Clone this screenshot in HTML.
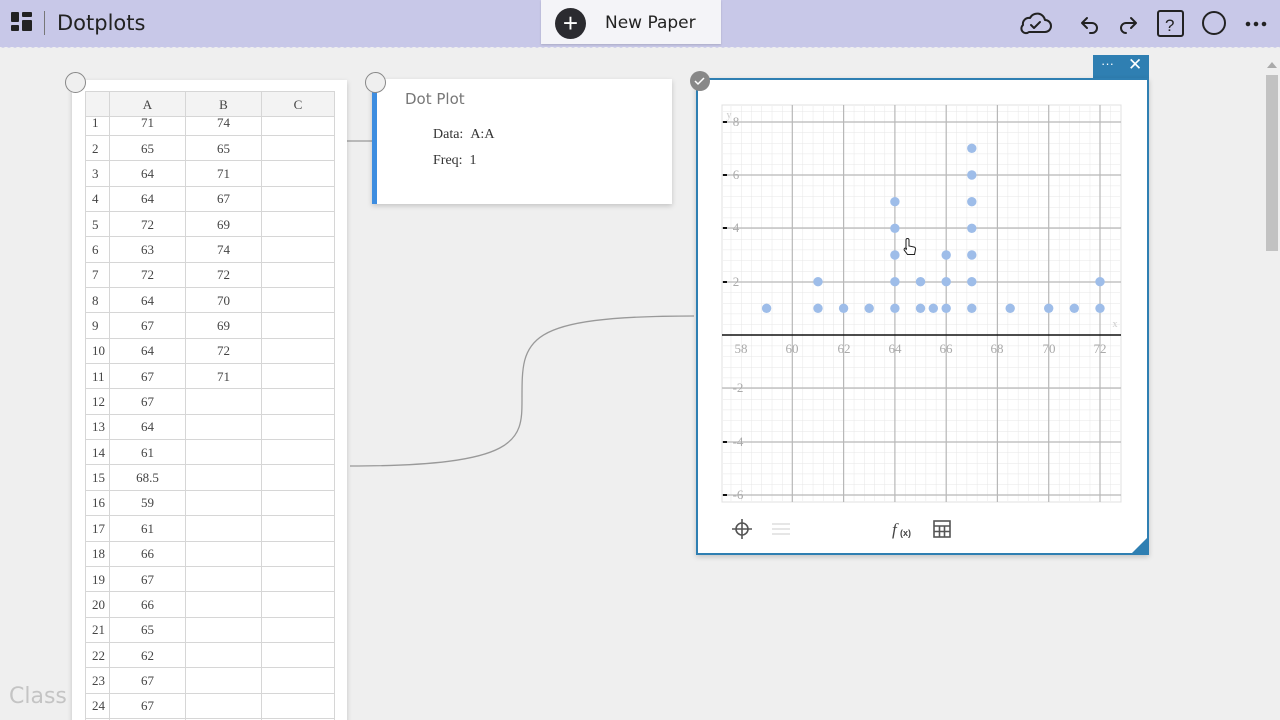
<!DOCTYPE html>
<html><head><meta charset="utf-8"><style>
*{margin:0;padding:0;box-sizing:border-box}
html,body{width:1280px;height:720px;overflow:hidden}
body{background:#efefef;font-family:"Liberation Sans",sans-serif;position:relative}
.top{position:absolute;left:0;top:0;width:1280px;height:47px;background:#c8c8e8}
.top:after{content:"";position:absolute;left:0;top:45px;width:1280px;height:4px;background:radial-gradient(circle at 3px 0,#c8c8e8 2.5px,transparent 3px) 0 0/6px 4px repeat-x}
.title{position:absolute;left:57px;top:11px;font-size:21px;color:#222;font-family:"DejaVu Sans",sans-serif}
.np{position:absolute;left:541px;top:0;width:180px;height:44px;background:#f4f4f8;box-shadow:0 1px 2px rgba(0,0,0,.15)}
.np .c{position:absolute;left:14px;top:8px;width:31px;height:31px;border-radius:50%;background:#2b2b30;color:#fff;font-size:26px;line-height:30px;text-align:center}
.np span{position:absolute;left:64px;top:13px;font-size:17px;color:#222;font-family:"DejaVu Sans",sans-serif}
.card{position:absolute;background:#fff;box-shadow:0 2px 5px rgba(0,0,0,.18)}
table{border-collapse:collapse;font-family:"Liberation Serif",serif;font-size:13px;color:#444}
td{border:1px solid #d6d6d6;text-align:center;height:25.35px;padding:0;line-height:13px}
td:first-child{text-align:left;padding-left:6px;width:24px}
tr.h td{background:#f3f3f3;height:25px}
tr.r1 td{height:19px;vertical-align:top;line-height:12px}
.handle{position:absolute;width:21px;height:21px;border-radius:50%;border:1.5px solid #888;background:#efefef}
.class{position:absolute;left:9px;top:684px;font-size:22px;color:#c4c4c4;font-family:"DejaVu Sans",sans-serif}
</style></head><body>
<div class="top"></div>
<svg style="position:absolute;left:10px;top:12px" width="24" height="22"><rect x="1" y="0" width="8" height="10" rx="1" fill="#222"/><rect x="12" y="0" width="10" height="5" rx="1" fill="#222"/><rect x="1" y="13" width="8" height="6" rx="1" fill="#222"/><rect x="12" y="8" width="10" height="11" rx="1" fill="#222"/></svg>
<div style="position:absolute;left:44px;top:11px;width:1px;height:24px;background:#777"></div>
<div class="title">Dotplots</div>
<div class="np"><div class="c">+</div><span>New Paper</span></div>
<svg style="position:absolute;left:1015px;top:8px" width="260" height="32" fill="none" stroke="#222" stroke-width="2" stroke-linecap="round" stroke-linejoin="round">
<path d="M14 24h16a6 6 0 0 0 0-12 8 8 0 0 0-15-2 6 6 0 0 0-7 7 4 4 0 0 0 6 7z"/><path d="M16 17l3 3 6-6"/>
<path d="M72 10l-5 5 5 5M67 15h10a5 5 0 0 1 0 10h-2"/>
<path d="M116 10l5 5-5 5M121 15h-10a5 5 0 0 0 0 10"/>
<rect x="143" y="3" width="25" height="25" rx="2"/><text x="150" y="23" font-size="17" fill="#222" stroke="none" font-family="Liberation Sans">?</text>
<circle cx="199" cy="15" r="11"/>
<circle cx="233" cy="16" r="1.3" fill="#222"/><circle cx="241" cy="16" r="1.3" fill="#222"/><circle cx="249" cy="16" r="1.3" fill="#222"/>
</svg>
<svg style="position:absolute;left:0;top:0" width="1280" height="720" fill="none" stroke="#999" stroke-width="1.3">
<path d="M347 141H374"/><path d="M350 466C520 466 522 440 522 400C522 340 520 316 694 316"/>
</svg>
<div class="card" style="left:72px;top:80px;width:275px;height:650px;overflow:hidden">
<table style="position:absolute;left:13px;top:11px;width:250px">
<tr class="h"><td></td><td style="width:76px">A</td><td style="width:76px">B</td><td style="width:73px">C</td></tr>
<tr class="r1"><td>1</td><td>71</td><td>74</td><td></td></tr>
<tr><td>2</td><td>65</td><td>65</td><td></td></tr>
<tr><td>3</td><td>64</td><td>71</td><td></td></tr>
<tr><td>4</td><td>64</td><td>67</td><td></td></tr>
<tr><td>5</td><td>72</td><td>69</td><td></td></tr>
<tr><td>6</td><td>63</td><td>74</td><td></td></tr>
<tr><td>7</td><td>72</td><td>72</td><td></td></tr>
<tr><td>8</td><td>64</td><td>70</td><td></td></tr>
<tr><td>9</td><td>67</td><td>69</td><td></td></tr>
<tr><td>10</td><td>64</td><td>72</td><td></td></tr>
<tr><td>11</td><td>67</td><td>71</td><td></td></tr>
<tr><td>12</td><td>67</td><td></td><td></td></tr>
<tr><td>13</td><td>64</td><td></td><td></td></tr>
<tr><td>14</td><td>61</td><td></td><td></td></tr>
<tr><td>15</td><td>68.5</td><td></td><td></td></tr>
<tr><td>16</td><td>59</td><td></td><td></td></tr>
<tr><td>17</td><td>61</td><td></td><td></td></tr>
<tr><td>18</td><td>66</td><td></td><td></td></tr>
<tr><td>19</td><td>67</td><td></td><td></td></tr>
<tr><td>20</td><td>66</td><td></td><td></td></tr>
<tr><td>21</td><td>65</td><td></td><td></td></tr>
<tr><td>22</td><td>62</td><td></td><td></td></tr>
<tr><td>23</td><td>67</td><td></td><td></td></tr>
<tr><td>24</td><td>67</td><td></td><td></td></tr>
<tr><td>25</td><td></td><td></td><td></td></tr>
</table>
</div>
<div class="handle" style="left:65px;top:72px"></div>
<div class="class">Class</div>
<div class="card" style="left:372px;top:79px;width:300px;height:125px;border-left:5px solid #3d8de0">
<div style="position:absolute;left:28px;top:11px;font-size:15px;color:#777;font-family:'DejaVu Sans',sans-serif">Dot Plot</div>
<div style="position:absolute;left:56px;top:43px;font-family:'Liberation Serif',serif;font-size:14px;color:#333;line-height:26px">Data:&nbsp;&nbsp;A:A<br>Freq:&nbsp;&nbsp;1</div>
</div>
<div class="handle" style="left:365px;top:72px"></div>
<div style="position:absolute;left:1093px;top:55px;width:56px;height:24px;background:#2f7fb2"><span style="position:absolute;left:8px;top:1px;color:#fff;font-size:13px">···</span><span style="position:absolute;left:35px;top:0px;color:#fff;font-size:17px">✕</span></div>
<div class="card" style="left:696px;top:78px;width:453px;height:477px;border:2px solid #2f7fb2"></div>
<svg style="position:absolute;left:0;top:0" width="1280" height="720">
<defs><pattern id="g" patternUnits="userSpaceOnUse" x="741" y="335" width="10.256" height="10.667"><path d="M0 0V10.667M0 0H10.256" stroke="#e6e6e6" stroke-width="1" fill="none"/></pattern></defs>
<rect x="722" y="105" width="399" height="397" fill="#fff" stroke="#e0e0e0"/>
<rect x="723" y="106" width="397" height="395" fill="url(#g)"/>
<g stroke="#b8b8b8" stroke-width="1.2">
<path d="M792.3 105V502M843.6 105V502M894.9 105V502M946.2 105V502M997.4 105V502M1048.7 105V502M1100 105V502"/>
<path d="M722 122H1121M722 175H1121M722 228H1121M722 282H1121M722 388H1121M722 442H1121M722 495H1121"/>
</g>
<path d="M722 335H1121" stroke="#111" stroke-width="1.5"/>
<g font-family="Liberation Serif,serif" font-size="13" fill="#aaa" text-anchor="middle">
<text x="741" y="353">58</text><text x="792" y="353">60</text><text x="844" y="353">62</text><text x="895" y="353">64</text><text x="946" y="353">66</text><text x="997" y="353">68</text><text x="1049" y="353">70</text><text x="1100" y="353">72</text>
<text x="736" y="126">8</text><text x="736" y="179">6</text><text x="736" y="232">4</text><text x="736" y="286">2</text><text x="738" y="392">-2</text><text x="738" y="446">-4</text><text x="738" y="499">-6</text>
<text x="729" y="118" font-size="10" fill="#ccc">y</text><text x="1115" y="327" font-size="10" fill="#ccc">x</text>
</g>
<g fill="#111"><rect x="723" y="121" width="4" height="2"/><rect x="723" y="174" width="4" height="2"/><rect x="723" y="227" width="4" height="2"/><rect x="723" y="281" width="4" height="2"/><rect x="723" y="441" width="4" height="2"/><rect x="723" y="494" width="4" height="2"/></g>
<g fill="#9ebde9">
<circle cx="766.6" cy="308.3" r="4.7"/>
<circle cx="818" cy="308.3" r="4.7"/><circle cx="818" cy="281.7" r="4.7"/>
<circle cx="843.6" cy="308.3" r="4.7"/><circle cx="869.2" cy="308.3" r="4.7"/>
<circle cx="894.9" cy="308.3" r="4.7"/><circle cx="894.9" cy="281.7" r="4.7"/><circle cx="894.9" cy="255" r="4.7"/><circle cx="894.9" cy="228.3" r="4.7"/><circle cx="894.9" cy="201.7" r="4.7"/>
<circle cx="920.5" cy="308.3" r="4.7"/><circle cx="920.5" cy="281.7" r="4.7"/><circle cx="933.3" cy="308.3" r="4.7"/>
<circle cx="946.2" cy="308.3" r="4.7"/><circle cx="946.2" cy="281.7" r="4.7"/><circle cx="946.2" cy="255" r="4.7"/>
<circle cx="971.8" cy="308.3" r="4.7"/><circle cx="971.8" cy="281.7" r="4.7"/><circle cx="971.8" cy="255" r="4.7"/><circle cx="971.8" cy="228.3" r="4.7"/><circle cx="971.8" cy="201.7" r="4.7"/><circle cx="971.8" cy="175" r="4.7"/><circle cx="971.8" cy="148.3" r="4.7"/>
<circle cx="1010.2" cy="308.3" r="4.7"/><circle cx="1048.7" cy="308.3" r="4.7"/><circle cx="1074.3" cy="308.3" r="4.7"/><circle cx="1100" cy="308.3" r="4.7"/><circle cx="1100" cy="281.7" r="4.7"/>
</g>
<path d="M906 250v-10a1.5 1.5 0 0 1 3 0v6l5 1a2 2 0 0 1 1.5 2.5l-1 5h-7l-3-4a1.4 1.4 0 0 1 2-2z" fill="#fff" stroke="#222" stroke-width="1"/>
<g stroke="#555" stroke-width="1.6" fill="none"><circle cx="742" cy="529" r="6"/><path d="M742 519V539M732 529H752"/></g>
<g stroke="#ccc" stroke-width="1"><path d="M772 524H790M772 529H790M772 534H790"/></g>
<text x="892" y="535" font-family="Liberation Serif,serif" font-style="italic" font-size="17" fill="#444">f</text><text x="900" y="536" font-family="Liberation Sans" font-weight="bold" font-size="9" fill="#444">(x)</text>
<g stroke="#555" stroke-width="1.6" fill="none"><rect x="934" y="521" width="16" height="16"/><path d="M934 526H950M934 531.5H950M939.5 526V537M944.5 526V537"/></g>
<path d="M1148 537L1148 555L1130 555Z" fill="#2f7fb2"/>
<circle cx="700" cy="81" r="10" fill="#888"/><path d="M695 81l3 3 6-6" stroke="#fff" stroke-width="1.5" fill="none"/>
</svg>
<div style="position:absolute;left:1266px;top:75px;width:12px;height:176px;background:#c2c2c2"></div>
<div style="position:absolute;left:1267px;top:62px;width:0;height:0;border-left:5px solid transparent;border-right:5px solid transparent;border-bottom:6px solid #aaa"></div>
</body></html>
